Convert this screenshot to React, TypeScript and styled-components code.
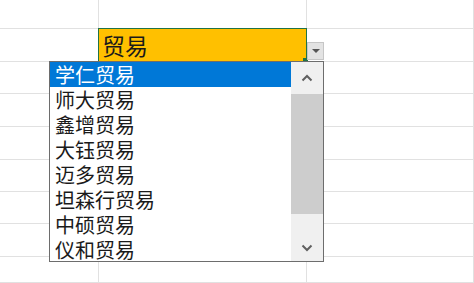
import React from "react";
import styled, { createGlobalStyle } from "styled-components";

const GlobalStyle = createGlobalStyle`
  html, body { margin: 0; padding: 0; background: #ffffff; overflow: hidden; }
  body { font-family: "Noto Sans CJK SC", "Noto Sans", sans-serif; }
  * { box-sizing: border-box; }
`;

const Sheet = styled.div`
  position: relative;
  width: 474px;
  height: 283px;
  overflow: hidden;
  background: #ffffff;
`;

const Grid = styled.div`
  display: grid;
  grid-template-columns: 99px 208px 1fr;
  grid-template-rows: 29px 33px 32px 33px 33px 32px 32px 33px 1fr;
  width: 100%;
  height: 100%;
`;

const Cell = styled.div<{ $active?: boolean }>`
  position: relative;
  border-right: 1px solid #e1e1e1;
  border-bottom: 1px solid #e1e1e1;
  background: ${(p) => (p.$active ? "#ffc000" : "#ffffff")};
  display: flex;
  align-items: center;
  padding-left: 3px;
  font-size: 23px;
  color: #1a1a1a;
  line-height: 1;
  ${(p) =>
    p.$active &&
    `
    &::after {
      content: "";
      position: absolute;
      left: -1px; top: -1px; right: -1px; bottom: -1px;
      border: 1px solid #217346;
      pointer-events: none;
    }
  `}
`;

const CellText = styled.span`
  position: relative;
`;

const FillHandle = styled.div`
  position: absolute;
  left: 303px;
  top: 58px;
  width: 5px;
  height: 4px;
  background: #217346;
`;

const DropButton = styled.div`
  position: absolute;
  left: 307px;
  top: 42px;
  width: 17px;
  height: 18px;
  background: #e3e3e3;
  border: 1px solid #c6c6c6;
  display: flex;
  align-items: center;
  justify-content: center;
`;

const Triangle = styled.div`
  width: 0;
  height: 0;
  border-left: 4px solid transparent;
  border-right: 4px solid transparent;
  border-top: 4px solid #555555;
`;

const List = styled.div`
  position: absolute;
  left: 49px;
  top: 61px;
  width: 275px;
  height: 201px;
  border: 1px solid #6d6d6d;
  background: #ffffff;
  display: flex;
  overflow: hidden;
`;

const Items = styled.div`
  flex: 1;
  display: flex;
  flex-direction: column;
`;

const Item = styled.div<{ $selected?: boolean }>`
  height: 25px;
  flex: 0 0 25px;
  padding-left: 5px;
  display: flex;
  align-items: center;
  font-size: 20px;
  line-height: 1;
  color: ${(p) => (p.$selected ? "#ffffff" : "#1a1a1a")};
  background: ${(p) => (p.$selected ? "#0078d7" : "transparent")};
  white-space: nowrap;
`;

const Scrollbar = styled.div`
  width: 32px;
  display: flex;
  flex-direction: column;
  background: #f0f0f0;
`;

const ArrowBox = styled.div`
  height: 32px;
  flex: 0 0 32px;
  display: flex;
  align-items: center;
  justify-content: center;
`;

const Thumb = styled.div`
  height: 120px;
  flex: 0 0 120px;
  background: #cdcdcd;
`;

const Track = styled.div`
  flex: 1;
  display: flex;
  align-items: flex-end;
  justify-content: center;
  padding-bottom: 9px;
`;

const Chevron = ({ up }: { up?: boolean }) => (
  <svg width="12" height="8" viewBox="0 0 12 8">
    <path
      d={up ? "M1.5 6.5 L6 2 L10.5 6.5" : "M1.5 1.5 L6 6 L10.5 1.5"}
      fill="none"
      stroke="#606060"
      strokeWidth="2"
    />
  </svg>
);

const items = [
  "学仁贸易",
  "师大贸易",
  "鑫增贸易",
  "大钰贸易",
  "迈多贸易",
  "坦森行贸易",
  "中硕贸易",
  "仪和贸易",
];

export default function App() {
  const rows = 9;
  const cols = 3;
  const cells: React.ReactNode[] = [];
  for (let r = 0; r < rows; r++) {
    for (let c = 0; c < cols; c++) {
      const active = r === 1 && c === 1;
      cells.push(
        <Cell key={`${r}-${c}`} $active={active}>
          {active && <CellText>贸易</CellText>}
        </Cell>
      );
    }
  }
  return (
    <>
      <GlobalStyle />
      <Sheet>
        <Grid>{cells}</Grid>
        <FillHandle />
        <DropButton>
          <Triangle />
        </DropButton>
        <List>
          <Items>
            {items.map((t, i) => (
              <Item key={t} $selected={i === 0}>
                {t}
              </Item>
            ))}
          </Items>
          <Scrollbar>
            <ArrowBox>
              <Chevron up />
            </ArrowBox>
            <Thumb />
            <Track>
              <Chevron />
            </Track>
          </Scrollbar>
        </List>
      </Sheet>
    </>
  );
}
